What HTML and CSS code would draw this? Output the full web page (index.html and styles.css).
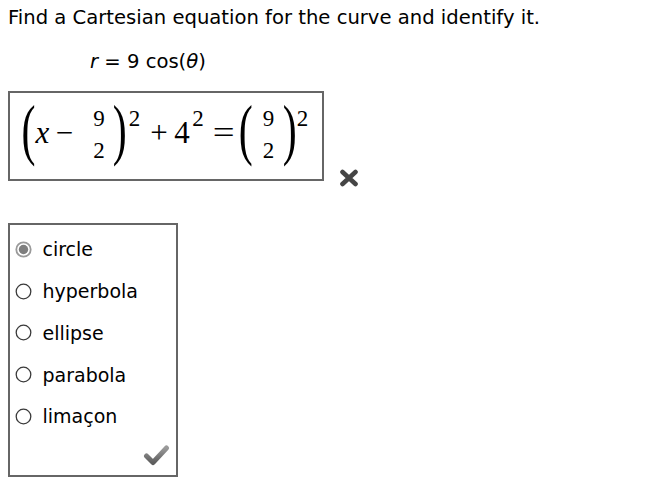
FILE: index.html
```html
<!DOCTYPE html>
<html>
<head>
<meta charset="utf-8">
<link rel="stylesheet" href="styles.css">
</head>
<body>
<div class="page">
  <p class="title">Find a Cartesian equation for the curve and identify it.</p>
  <p class="given"><i>r</i> = 9 cos(<i>θ</i>)</p>
  <div class="answer-row">
    <div class="eqbox">
      <span class="paren p1">(</span>
      <span class="mm mi">x</span>
      <span class="mm minus">−</span>
      <span class="frac fr1"><span>9</span><span>2</span></span>
      <span class="paren p2">)</span>
      <span class="sup su1">2</span>
      <span class="mm plus">+</span>
      <span class="mm four">4</span>
      <span class="sup su2">2</span>
      <span class="mm equals">=</span>
      <span class="paren p3">(</span>
      <span class="frac fr2"><span>9</span><span>2</span></span>
      <span class="paren p4">)</span>
      <span class="sup su3">2</span>
    </div>
    <svg class="xmark" width="22" height="18" viewBox="0 0 22 18"><path d="M4.5 3 L17.5 15 M17.5 3 L4.5 15" stroke="#454545" stroke-width="4.6" stroke-linecap="round"/></svg>
  </div>
  <div class="choices">
    <label class="choice"><svg class="radio" width="17" height="17" viewBox="0 0 17 17"><circle cx="8.5" cy="8.5" r="7.2" fill="#fff" stroke="#9a9a9a" stroke-width="1.8"/><circle cx="8.5" cy="8.5" r="4.7" fill="#7e7e7e"/></svg>circle</label>
    <label class="choice"><svg class="radio" width="17" height="17" viewBox="0 0 17 17"><circle cx="8.5" cy="8.5" r="7.3" fill="#fff" stroke="#3a3a3a" stroke-width="1.3"/></svg>hyperbola</label>
    <label class="choice"><svg class="radio" width="17" height="17" viewBox="0 0 17 17"><circle cx="8.5" cy="8.5" r="7.3" fill="#fff" stroke="#3a3a3a" stroke-width="1.3"/></svg>ellipse</label>
    <label class="choice"><svg class="radio" width="17" height="17" viewBox="0 0 17 17"><circle cx="8.5" cy="8.5" r="7.3" fill="#fff" stroke="#3a3a3a" stroke-width="1.3"/></svg>parabola</label>
    <label class="choice"><svg class="radio" width="17" height="17" viewBox="0 0 17 17"><circle cx="8.5" cy="8.5" r="7.3" fill="#fff" stroke="#3a3a3a" stroke-width="1.3"/></svg>limaçon</label>
    <div class="checkrow">
      <svg class="check" width="27" height="23" viewBox="0 0 27 23"><defs><linearGradient id="cg" x1="0" y1="0" x2="0" y2="1"><stop offset="0" stop-color="#9a9a9a"/><stop offset="1" stop-color="#5e5e5e"/></linearGradient></defs><path d="M3.5 12 L10 18.5 L23.5 4" fill="none" stroke="url(#cg)" stroke-width="5" stroke-linecap="round" stroke-linejoin="round"/></svg>
    </div>
  </div>
</div>
</body>
</html>
```
FILE: styles.css
```css
html, body { margin: 0; padding: 0; background: #fff; }
body { font-family: "DejaVu Sans", Verdana, sans-serif; color: #000; }
.page { padding: 6px 0 0 8px; }
.title { margin: 0; font-size: 19.6px; line-height: 24px; }
.given { margin: 20px 0 0 82px; font-size: 19.6px; line-height: 24px; }
.answer-row { display: flex; align-items: flex-end; margin-top: 17px; }
.eqbox {
  width: 316px; height: 90px; box-sizing: border-box;
  border: 2px solid #666; display: flex; align-items: flex-start;
  padding: 0 0 0 11.5px;
  font-family: "Liberation Serif", "DejaVu Serif", serif;
}
.mm { font-size: 31px; line-height: 31px; margin-top: 24px; }
.mi { font-style: italic; margin-left: 0; }
.minus { margin-left: 6.5px; }
.plus { margin-left: 10px; }
.four { margin-left: 6.5px; }
.equals { margin-left: 11px; transform: scaleX(1.25); }
.paren { font-size: 42px; line-height: 42px; margin-top: 15px; transform: scaleY(1.62); display: inline-block; }
.p2 { margin-left: 8px; }
.p3 { margin-left: 6.5px; }
.p4 { margin-left: 8.5px; }
.frac { display: flex; flex-direction: column; align-items: center; font-size: 23px; line-height: 32px; margin-top: 10px; }
.fr1 { margin-left: 20px; }
.fr2 { margin-left: 10px; }
.sup { font-size: 23px; line-height: 23px; margin-top: 13.7px; }
.su1 { margin-left: 2px; }
.su2 { margin-left: 2.5px; }
.su3 { margin-left: 0; }
.xmark { margin: 0 0 -6px 14px; flex: none; }
.choices {
  margin-top: 42px; width: 170px; height: 254px; box-sizing: border-box;
  border: 2px solid #666; padding: 3.6px 0 0 5px;
  display: flex; flex-direction: column;
}
.choice { display: flex; align-items: center; gap: 11px; font-size: 19px; height: 41.75px; }
.radio { flex: none; margin-left: -0.5px; }
.checkrow { display: flex; justify-content: flex-end; padding: 7px 6px 0 0; }
```
